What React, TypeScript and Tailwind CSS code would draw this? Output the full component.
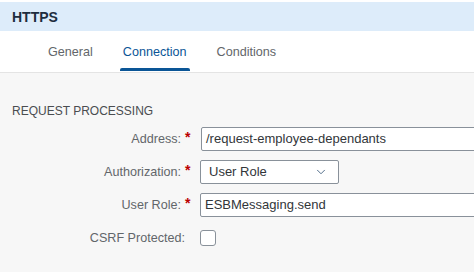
import { ChevronDown } from "lucide-react";

const font = { fontFamily: '"Liberation Sans", Arial, sans-serif' };

function Label({ text, required }: { text: string; required?: boolean }) {
  return (
    <div className="w-[193px] shrink-0 flex items-center justify-end">
      <span className="text-[12.6px] text-[#62666a]">{text}</span>
      {required ? (
        <span className="ml-[4px] w-[8px] text-[14px] font-bold text-[#bb0000] leading-none -mt-[3px]">
          *
        </span>
      ) : (
        <span className="w-[8px]" />
      )}
    </div>
  );
}

export default function App() {
  return (
    <div className="w-[474px] h-[275px] overflow-hidden bg-white" style={font}>
      <div className="mt-[2px] h-[29px] bg-[#ddecfa] flex items-center px-[12px]">
        <span className="mt-[2px] text-[14px] font-bold text-[#1d2d3e]">HTTPS</span>
      </div>

      {/* Tabs */}
      <div className="h-[42px] flex items-stretch pl-[45px] gap-[24px] border-b border-[#e4e4e4]">
        {["General", "Connection", "Conditions"].map((t) => {
          const active = t === "Connection";
          return (
            <div
              key={t}
              className={`relative flex items-center px-[3px] text-[12.6px] ${
                active ? "text-[#0a5596]" : "text-[#62666a]"
              }`}
            >
              <span className="mt-[1px]">{t}</span>
              {active && (
                <div className="absolute left-0 right-0 bottom-[1px] h-[3px] rounded-t-[2px] bg-[#0a5596]" />
              )}
            </div>
          );
        })}
      </div>

      {/* Content */}
      <div className="h-[199px] bg-[#f7f7f7] pt-[31px]">
        <div className="pl-[12px] text-[12px] text-[#4a4d50] leading-[14px]">
          REQUEST PROCESSING
        </div>

        <div className="mt-[9px] flex flex-col gap-[9px]">
          <div className="flex items-center h-[24px]">
            <Label text="Address:" required />
            <div className="ml-[8px] h-[24px] w-[300px] shrink-0 bg-white border border-[#89919a] rounded-[2px] flex items-center pl-[4px] text-[13px] text-[#32363a]">
              /request-employee-dependants
            </div>
          </div>

          <div className="flex items-center h-[24px]">
            <Label text="Authorization:" required />
            <div className="ml-[7px] h-[24px] w-[139px] shrink-0 bg-white border border-[#89919a] rounded-[2px] flex items-center justify-between pl-[8px] pr-[10px] text-[13px] text-[#32363a]">
              <span>User Role</span>
              <ChevronDown className="size-[14px] text-[#3c5a7a]" strokeWidth={1.5} />
            </div>
          </div>

          <div className="flex items-center h-[24px]">
            <Label text="User Role:" required />
            <div className="ml-[7px] h-[24px] w-[300px] shrink-0 bg-white border border-[#89919a] rounded-[2px] flex items-center pl-[4px] text-[13px] text-[#32363a]">
              ESBMessaging.send
            </div>
          </div>

          <div className="flex items-center h-[24px]">
            <div className="w-[193px] shrink-0 flex justify-end pr-[8px]">
              <span className="text-[12.6px] text-[#62666a]">CSRF Protected:</span>
            </div>
            <div className="ml-[7px] size-[16px] bg-white border border-[#89919a] rounded-[3px]" />
          </div>
        </div>
      </div>
    </div>
  );
}
